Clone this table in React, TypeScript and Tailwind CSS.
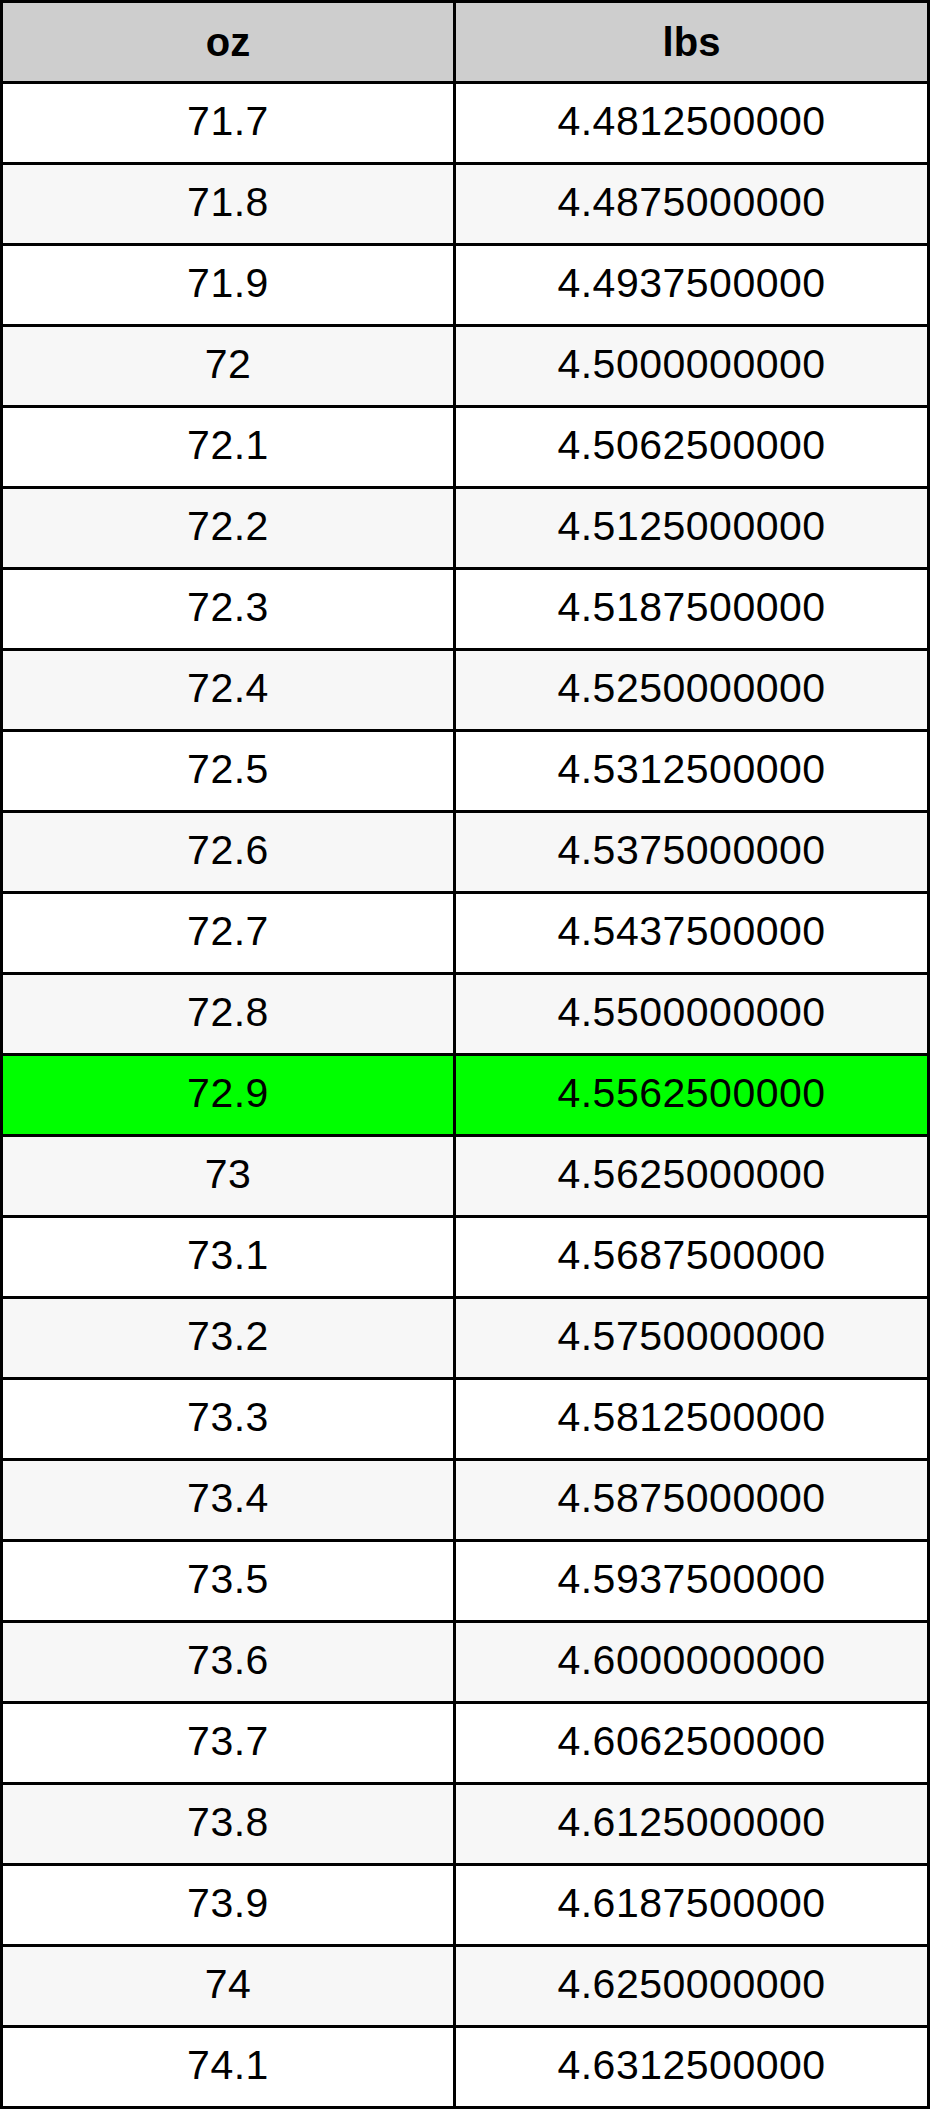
import React from "react";

const rows: [string, string][] = [
  ["71.7", "4.4812500000"],
  ["71.8", "4.4875000000"],
  ["71.9", "4.4937500000"],
  ["72", "4.5000000000"],
  ["72.1", "4.5062500000"],
  ["72.2", "4.5125000000"],
  ["72.3", "4.5187500000"],
  ["72.4", "4.5250000000"],
  ["72.5", "4.5312500000"],
  ["72.6", "4.5375000000"],
  ["72.7", "4.5437500000"],
  ["72.8", "4.5500000000"],
  ["72.9", "4.5562500000"],
  ["73", "4.5625000000"],
  ["73.1", "4.5687500000"],
  ["73.2", "4.5750000000"],
  ["73.3", "4.5812500000"],
  ["73.4", "4.5875000000"],
  ["73.5", "4.5937500000"],
  ["73.6", "4.6000000000"],
  ["73.7", "4.6062500000"],
  ["73.8", "4.6125000000"],
  ["73.9", "4.6187500000"],
  ["74", "4.6250000000"],
  ["74.1", "4.6312500000"],
];

export default function App() {
  return (
    <div className="bg-white w-[930px] min-h-[2115px] font-['Liberation_Sans',Arial,sans-serif] text-black">
      <div className="w-[930px] border-[3px] border-black">
        <div className="grid grid-cols-[450px_471px] gap-x-[3px] bg-black h-[78px]">
          <div className="bg-[#cecece] flex items-center justify-center text-[40px] font-bold">oz</div>
          <div className="bg-[#cecece] flex items-center justify-center text-[40px] font-bold">lbs</div>
        </div>
        {rows.map(([oz, lbs], i) => {
          const bg =
            oz === "72.9" ? "bg-[#00ff00]" : i % 2 === 1 ? "bg-[#f7f7f7]" : "bg-white";
          return (
            <div
              key={oz}
              className="grid grid-cols-[450px_471px] gap-x-[3px] bg-black h-[81px] border-t-[3px] border-black"
            >
              <div className={`${bg} flex items-center justify-center text-[41px] tracking-[0.5px] pb-[2px]`}>
                {oz}
              </div>
              <div className={`${bg} flex items-center justify-center text-[41px] tracking-[0.5px] pb-[2px]`}>
                {lbs}
              </div>
            </div>
          );
        })}
      </div>
    </div>
  );
}
